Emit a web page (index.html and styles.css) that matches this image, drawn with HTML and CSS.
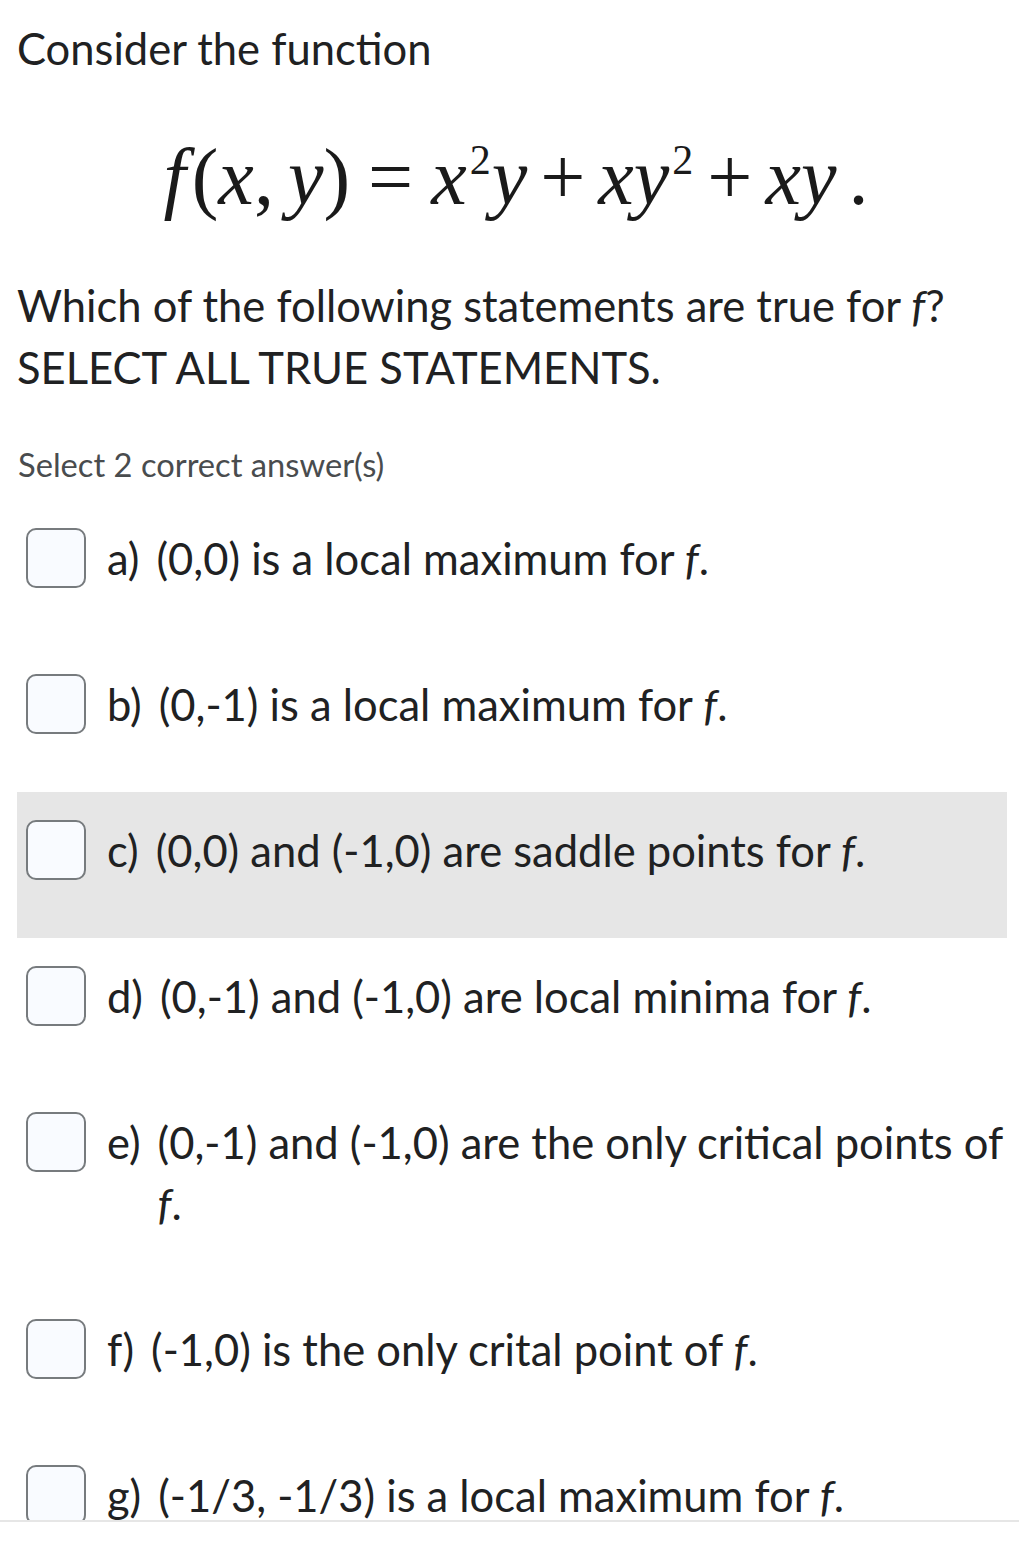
FILE: index.html
```html
<!DOCTYPE html>
<html lang="en">
<head>
<meta charset="utf-8">
<title>Question</title>
<link rel="stylesheet" href="styles.css">
</head>
<body>
<div class="page">
  <div class="content">
    <p class="intro">Consider the function</p>
    <div class="formula"><span class="math"><span class="mi fn">f</span><span class="mo">(</span><span class="mi">x</span><span class="mo comma">,</span><span class="mi">y</span><span class="mo">)</span><span class="rel">=</span><span class="mi">x</span><sup class="sup">2</sup><span class="mi">y</span><span class="bin">+</span><span class="mi">x</span><span class="mi">y</span><sup class="sup">2</sup><span class="bin">+</span><span class="mi">x</span><span class="mi">y</span><span class="dot">.</span></span></div>
    <p class="question">Which of the following statements are true for <i>f</i>?<br>SELECT ALL TRUE STATEMENTS.</p>
    <p class="hint">Select 2 correct answer(s)</p>
    <ul class="options">
      <li class="option"><span class="box"></span><span class="letter">a)</span><span class="text">(0,0) is a local maximum for <i>f</i>.</span></li>
      <li class="option"><span class="box"></span><span class="letter">b)</span><span class="text">(0,-1) is a local maximum for <i>f</i>.</span></li>
      <li class="option option-hover"><span class="box"></span><span class="letter">c)</span><span class="text">(0,0) and (-1,0) are saddle points for <i>f</i>.</span></li>
      <li class="option"><span class="box"></span><span class="letter">d)</span><span class="text">(0,-1) and (-1,0) are local minima for <i>f</i>.</span></li>
      <li class="option"><span class="box"></span><span class="letter">e)</span><span class="text">(0,-1) and (-1,0) are the only critical points of <i>f</i>.</span></li>
      <li class="option"><span class="box"></span><span class="letter">f)</span><span class="text">(-1,0) is the only crital point of <i>f</i>.</span></li>
      <li class="option"><span class="box"></span><span class="letter">g)</span><span class="text">(-1/3, -1/3) is a local maximum for <i>f</i>.</span></li>
    </ul>
  </div>
</div>
</body>
</html>
```

FILE: styles.css
```css
html, body {
  margin: 0;
  padding: 0;
  background: #ffffff;
}

body {
  font-family: Lato, "Noto Sans", sans-serif;
  color: #202122;
}

.page {
  height: 1520px;
  overflow: hidden;
  border-bottom: 2px solid #e6e6e6;
}

.content {
  padding: 17px 12px 0 17px;
}

.intro {
  margin: 0;
  font-size: 43.5px;
  line-height: 62px;
}

.formula {
  height: 195px;
  display: flex;
  align-items: center;
  justify-content: center;
  padding-left: 8px;
}

.math {
  font-family: "Liberation Serif", "DejaVu Serif", serif;
  font-size: 80px;
  line-height: 1;
  white-space: nowrap;
  color: #1a1a1a;
}

.math .mi {
  font-style: italic;
}

.math .fn {
  margin-right: 6px;
}

.math .comma {
  margin-right: 14px;
}

.math .rel {
  margin: 0 18px;
}

.math .bin {
  margin: 0 13px;
}

.math .sup {
  font-size: 42px;
  line-height: 0;
  vertical-align: 30px;
  margin: 0 1px 0 3px;
}

.math .dot {
  margin-left: 12px;
}

.question {
  margin: 0;
  font-size: 43.5px;
  line-height: 62px;
}

.hint {
  margin: 45px 0 13px 1px;
  font-size: 32.7px;
  line-height: 44px;
  color: #494c4e;
}

.options {
  list-style: none;
  margin: 0;
  padding: 0;
}

.option {
  display: flex;
  align-items: flex-start;
  padding: 28px 0 57px 9px;
  font-size: 43.5px;
  line-height: 61px;
}

.option-hover {
  background: #e6e6e6;
}

.box {
  flex: none;
  width: 56px;
  height: 56px;
  border: 2px solid #777b7e;
  border-radius: 10px;
  background: #f9fbff;
}

.letter {
  flex: none;
  margin-left: 21px;
  margin-right: 17px;
}

.text {
  flex: 1;
}
```
